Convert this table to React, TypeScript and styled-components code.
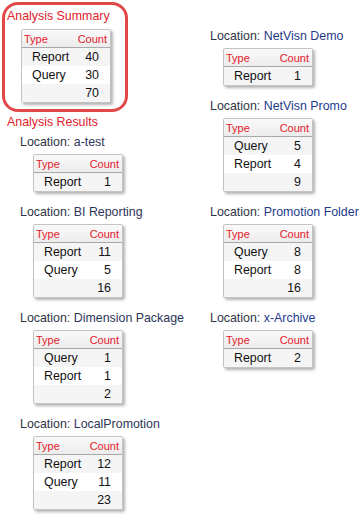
import React from "react";
import styled, { createGlobalStyle } from "styled-components";

type Row = { type: string; count: number };
type Location = { name: string; rows: Row[] };

const GlobalStyle = createGlobalStyle`
  html, body {
    margin: 0;
    padding: 0;
    background: #ffffff;
  }
  body {
    font-family: "Liberation Sans", Arial, sans-serif;
    font-size: 12.4px;
    color: #111111;
  }
`;

const Page = styled.div`
  display: grid;
  grid-template-columns: 208px 1fr;
  padding: 2px 0 0 2px;
  width: 363px;
  box-sizing: border-box;
`;

const Column = styled.div<{ $top?: number }>`
  display: flex;
  flex-direction: column;
  align-items: flex-start;
  padding-top: ${(p) => p.$top ?? 0}px;
`;

const SummaryBox = styled.section`
  width: 126px;
  height: 110px;
  box-sizing: border-box;
  border: 3px solid #e2474a;
  border-radius: 16px;
  padding: 4px 0 0 2px;
  display: flex;
  flex-direction: column;
  align-items: flex-start;
  gap: 5px;
`;

const SectionTitle = styled.h2<{ $gap?: number }>`
  margin: ${(p) => p.$gap ?? 0}px 0 0 0;
  padding-left: ${(p) => (p.$gap ? 5 : 0)}px;
  font-size: 12.4px;
  line-height: 15px;
  font-weight: normal;
  color: #e0202a;
`;

const Results = styled.div`
  display: flex;
  flex-direction: column;
  align-items: flex-start;
  padding: 5px 0 0 18px;
`;

const LocationBlock = styled.div`
  display: flex;
  flex-direction: column;
  align-items: flex-start;
  margin-bottom: 13px;
`;

const LocationLabel = styled.div`
  font-size: 12.4px;
  line-height: 15px;
  color: #2f3446;
  margin-bottom: 4px;
  white-space: nowrap;
`;

const LocationName = styled.span<{ $tone: "dark" | "blue" }>`
  color: ${(p) => (p.$tone === "blue" ? "#243a8c" : "#2c3558")};
`;

const Table = styled.div<{ $indent: number }>`
  width: 90px;
  box-sizing: border-box;
  margin-left: ${(p) => p.$indent}px;
  border: 1px solid #c4c4c4;
  border-radius: 2px;
  background: #ffffff;
  box-shadow: 2px 2px 3px rgba(0, 0, 0, 0.3);
  overflow: hidden;
`;

const HeaderRow = styled.div`
  display: flex;
  justify-content: space-between;
  align-items: center;
  height: 17px;
  padding: 0 3px 0 2px;
  background: linear-gradient(#fafafa, #ececec);
  border-bottom: 1px solid #a9a9a9;
  font-size: 11px;
  color: #e5202a;
`;

const DataRow = styled.div<{ $shaded: boolean }>`
  display: flex;
  justify-content: space-between;
  align-items: center;
  height: 18px;
  padding: 0 11px 0 10px;
  background: ${(p) => (p.$shaded ? "#f5f5f5" : "#ffffff")};
  font-size: 12.4px;
  color: #111111;
`;

const CountTable: React.FC<{ rows: Row[]; indent: number }> = ({ rows, indent }) => {
  const lines: Row[] =
    rows.length > 1
      ? [...rows, { type: "", count: rows.reduce((s, r) => s + r.count, 0) }]
      : rows;
  return (
    <Table $indent={indent}>
      <HeaderRow>
        <span>Type</span>
        <span>Count</span>
      </HeaderRow>
      {lines.map((r, i) => (
        <DataRow key={i} $shaded={i % 2 === 0}>
          <span>{r.type}</span>
          <span>{r.count}</span>
        </DataRow>
      ))}
    </Table>
  );
};

const LocationTable: React.FC<{ loc: Location; tone: "dark" | "blue" }> = ({ loc, tone }) => (
  <LocationBlock>
    <LocationLabel>
      Location: <LocationName $tone={tone}>{loc.name}</LocationName>
    </LocationLabel>
    <CountTable rows={loc.rows} indent={13} />
  </LocationBlock>
);

const leftLocations: Location[] = [
  { name: "a-test", rows: [{ type: "Report", count: 1 }] },
  {
    name: "BI Reporting",
    rows: [
      { type: "Report", count: 11 },
      { type: "Query", count: 5 },
    ],
  },
  {
    name: "Dimension Package",
    rows: [
      { type: "Query", count: 1 },
      { type: "Report", count: 1 },
    ],
  },
  {
    name: "LocalPromotion",
    rows: [
      { type: "Report", count: 12 },
      { type: "Query", count: 11 },
    ],
  },
];

const rightLocations: Location[] = [
  { name: "NetVisn Demo", rows: [{ type: "Report", count: 1 }] },
  {
    name: "NetVisn Promo",
    rows: [
      { type: "Query", count: 5 },
      { type: "Report", count: 4 },
    ],
  },
  {
    name: "Promotion Folder",
    rows: [
      { type: "Query", count: 8 },
      { type: "Report", count: 8 },
    ],
  },
  { name: "x-Archive", rows: [{ type: "Report", count: 2 }] },
];

const summary: Row[] = [
  { type: "Report", count: 40 },
  { type: "Query", count: 30 },
];

export default function App() {
  return (
    <>
      <GlobalStyle />
      <Page>
        <Column>
          <SummaryBox>
            <SectionTitle>Analysis Summary</SectionTitle>
            <CountTable rows={summary} indent={14} />
          </SummaryBox>
          <SectionTitle $gap={3}>Analysis Results</SectionTitle>
          <Results>
            {leftLocations.map((l) => (
              <LocationTable key={l.name} loc={l} tone="dark" />
            ))}
          </Results>
        </Column>
        <Column $top={27}>
          {rightLocations.map((l) => (
            <LocationTable key={l.name} loc={l} tone="blue" />
          ))}
        </Column>
      </Page>
    </>
  );
}
